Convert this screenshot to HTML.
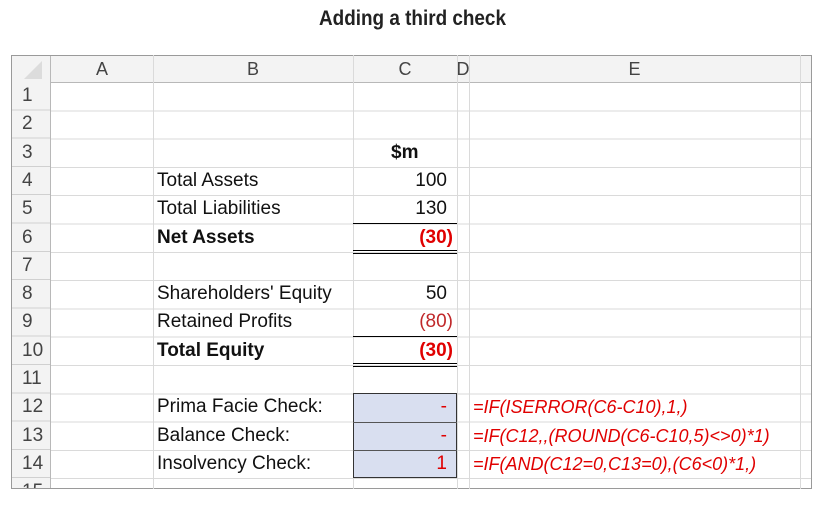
<!DOCTYPE html>
<html><head><style>
body{margin:0;width:825px;height:520px;background:#fff;position:relative;overflow:hidden;font-family:"Liberation Sans",sans-serif}
.title{position:absolute;left:0;width:825px;top:7px;text-align:center;font-size:21px;font-weight:bold;color:#222;transform:scaleX(0.9)}
.frame{position:absolute;left:11px;top:55px;width:801px;height:434px;border:1px solid #9a9a9a;box-sizing:border-box;overflow:hidden;
background:repeating-linear-gradient(to bottom,transparent 0,transparent 27.3px,#dadada 27.3px,#dadada 28.3px);background-position:0 27px}
.a{position:absolute}
.v{position:absolute;top:55px;height:434px;width:1px;background:#dadada}
.t{position:absolute;height:28.3px;line-height:28.3px;font-size:19px;color:#111;white-space:nowrap}
.rh{left:22px;color:#444;font-size:19px}
.hd{top:55px;height:27px;line-height:28px;color:#444;font-size:18px;text-align:center}
.r{text-align:right;right:368px}
.b{font-weight:bold}.red{color:#e00000}.dred{color:#c0282a}
.f{left:473px;color:#e00000;font-style:italic;font-size:18px}
.hl{position:absolute;left:353px;width:104px;height:1.5px;background:#000}
</style></head><body>
<div class="title">Adding a third check</div>
<div class="frame"></div>
<div class="a" style="left:12px;top:56px;width:799px;height:26px;background:#f3f3f3;border-bottom:1px solid #b8b8b8"></div>
<div class="a" style="left:12px;top:56px;width:38px;height:432px;background:#f3f3f3;border-right:1px solid #b8b8b8"></div>
<div class="a" style="left:12px;top:82px;width:38px;height:406px;background:repeating-linear-gradient(to bottom,transparent 0,transparent 27.3px,#d0d0d0 27.3px,#d0d0d0 28.3px)"></div>
<div class="a" style="left:24px;top:61px;width:0;height:0;border-left:18px solid transparent;border-bottom:18px solid #dcdcdc"></div>
<div class="v" style="left:153px"></div><div class="v" style="left:353px"></div><div class="v" style="left:457px"></div><div class="v" style="left:469px"></div><div class="v" style="left:800px"></div>
<div class="t hd" style="left:51px;width:102px">A</div>
<div class="t hd" style="left:153px;width:200px">B</div>
<div class="t hd" style="left:353px;width:104px">C</div>
<div class="t hd" style="left:456px;width:14px">D</div>
<div class="t hd" style="left:469px;width:331px">E</div>

<div class="t rh" style="top:82px">1</div>
<div class="t rh" style="top:110.3px">2</div>
<div class="t rh" style="top:138.6px">3</div>
<div class="t rh" style="top:166.9px">4</div>
<div class="t rh" style="top:195.2px">5</div>
<div class="t rh" style="top:223.5px">6</div>
<div class="t rh" style="top:251.8px">7</div>
<div class="t rh" style="top:280.1px">8</div>
<div class="t rh" style="top:308.4px">9</div>
<div class="t rh" style="top:336.7px">10</div>
<div class="t rh" style="top:365px">11</div>
<div class="t rh" style="top:393.3px">12</div>
<div class="t rh" style="top:421.6px">13</div>
<div class="t rh" style="top:449.9px">14</div>
<div class="a" style="left:12px;top:478.2px;width:38px;height:10px;overflow:hidden"><div class="t rh" style="top:0;left:10px">15</div></div>

<div class="a" style="left:353px;top:393.3px;width:104px;height:85px;background:#d9dff0;border:1px solid #333;box-sizing:border-box"></div>
<div class="a" style="left:353px;top:421.6px;width:104px;height:1px;background:#555"></div>
<div class="a" style="left:353px;top:449.9px;width:104px;height:1px;background:#555"></div>

<div class="hl" style="top:222.5px"></div>
<div class="hl" style="top:249.5px;height:1px"></div><div class="hl" style="top:252.5px;height:1px"></div>
<div class="hl" style="top:335.7px"></div>
<div class="hl" style="top:362.5px;height:1px"></div><div class="hl" style="top:365.5px;height:1px"></div>

<div class="t b" style="top:138.6px;left:391px">$m</div>
<div class="t" style="top:166.9px;left:157px">Total Assets</div>
<div class="t r" style="top:166.9px;right:378px">100</div>
<div class="t" style="top:195.2px;left:157px">Total Liabilities</div>
<div class="t r" style="top:195.2px;right:378px">130</div>
<div class="t b" style="top:223.5px;left:157px">Net Assets</div>
<div class="t r b red" style="top:223.5px;right:372px">(30)</div>
<div class="t" style="top:280.1px;left:157px">Shareholders' Equity</div>
<div class="t r" style="top:280.1px;right:378px">50</div>
<div class="t" style="top:308.4px;left:157px">Retained Profits</div>
<div class="t r dred" style="top:308.4px;right:372px">(80)</div>
<div class="t b" style="top:336.7px;left:157px">Total Equity</div>
<div class="t r b red" style="top:336.7px;right:372px">(30)</div>
<div class="t" style="top:393.3px;left:157px">Prima Facie Check:</div>
<div class="t r red" style="top:393.3px;right:378px">-</div>
<div class="t f" style="top:393.3px">=IF(ISERROR(C6-C10),1,)</div>
<div class="t" style="top:421.6px;left:157px">Balance Check:</div>
<div class="t r red" style="top:421.6px;right:378px">-</div>
<div class="t f" style="top:421.6px">=IF(C12,,(ROUND(C6-C10,5)&lt;&gt;0)*1)</div>
<div class="t" style="top:449.9px;left:157px">Insolvency Check:</div>
<div class="t r red" style="top:449.9px;right:378px">1</div>
<div class="t f" style="top:449.9px">=IF(AND(C12=0,C13=0),(C6&lt;0)*1,)</div>
</body></html>
